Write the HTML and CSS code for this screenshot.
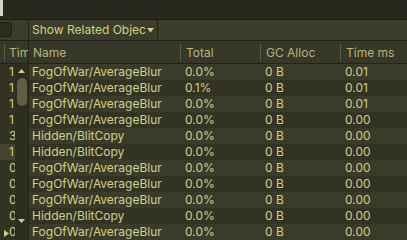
FILE: index.html
```html
<!DOCTYPE html>
<html>
<head>
<meta charset="utf-8">
<link rel="stylesheet" href="styles.css">
</head>
<body>
<div class="top"><div class="strip"></div></div>
<div class="toolbar">
  <div class="tb-left"><div class="field"></div></div>
  <div class="dropdown"><span class="dd-text">Show Related Objects</span><svg class="dd-arrow" width="7" height="5" viewBox="0 0 7 5"><path d="M0 0H7L3.5 4.5Z" fill="#cfcf8a"/></svg></div>
</div>
<div class="content">
  <div class="left">
    <div class="lhead"><span class="lline"></span><span class="ltext">Time ms</span></div>
    <div class="lbody">
      <div class="lnums">
        <div class="lrow">1</div>
        <div class="lrow">1</div>
        <div class="lrow">1</div>
        <div class="lrow">1</div>
        <div class="lrow">3</div>
        <div class="lrow sel">1</div>
        <div class="lrow">0</div>
        <div class="lrow">0</div>
        <div class="lrow">0</div>
        <div class="lrow">0</div>
        <div class="lrow"><svg class="fold" width="5" height="7" viewBox="0 0 5 7"><path d="M0 0L5 3.5L0 7Z" fill="#cfcf8a"/></svg>0</div>
      </div>
      <div class="scroll">
        <svg class="arr" width="7" height="4" viewBox="0 0 7 4"><path d="M0 4H7L3.5 0Z" fill="#cfcf8a"/></svg>
        <div class="thumb"></div>
        <div class="track-fill"></div>
        <svg class="arr" width="7" height="4" viewBox="0 0 7 4"><path d="M0 0H7L3.5 4Z" fill="#cfcf8a"/></svg>
      </div>
    </div>
  </div>
  <div class="table">
    <div class="thead">
      <div class="c name">Name</div>
      <div class="c col">Total</div>
      <div class="c col">GC Alloc</div>
      <div class="c col">Time ms</div>
    </div>
    <div class="row"><div class="c name">FogOfWar/AverageBlur</div><div class="c">0.0%</div><div class="c">0 B</div><div class="c">0.01</div></div>
    <div class="row"><div class="c name">FogOfWar/AverageBlur</div><div class="c">0.1%</div><div class="c">0 B</div><div class="c">0.01</div></div>
    <div class="row"><div class="c name">FogOfWar/AverageBlur</div><div class="c">0.0%</div><div class="c">0 B</div><div class="c">0.01</div></div>
    <div class="row"><div class="c name">FogOfWar/AverageBlur</div><div class="c">0.0%</div><div class="c">0 B</div><div class="c">0.00</div></div>
    <div class="row"><div class="c name">Hidden/BlitCopy</div><div class="c">0.0%</div><div class="c">0 B</div><div class="c">0.00</div></div>
    <div class="row"><div class="c name">Hidden/BlitCopy</div><div class="c">0.0%</div><div class="c">0 B</div><div class="c">0.00</div></div>
    <div class="row"><div class="c name">FogOfWar/AverageBlur</div><div class="c">0.0%</div><div class="c">0 B</div><div class="c">0.00</div></div>
    <div class="row"><div class="c name">FogOfWar/AverageBlur</div><div class="c">0.0%</div><div class="c">0 B</div><div class="c">0.00</div></div>
    <div class="row"><div class="c name">FogOfWar/AverageBlur</div><div class="c">0.0%</div><div class="c">0 B</div><div class="c">0.00</div></div>
    <div class="row"><div class="c name">Hidden/BlitCopy</div><div class="c">0.0%</div><div class="c">0 B</div><div class="c">0.00</div></div>
    <div class="row"><div class="c name">FogOfWar/AverageBlur</div><div class="c">0.0%</div><div class="c">0 B</div><div class="c">0.00</div></div>
  </div>
</div>
</body>
</html>
```
FILE: styles.css
```css
html, body {
  margin: 0;
  padding: 0;
  width: 407px;
  height: 240px;
  overflow: hidden;
  background: #353524;
  font-family: Inter, "Noto Sans", sans-serif;
  font-size: 12px;
  color: #cfcf8a;
}
.top {
  height: 19px;
  background: #28281d;
  border-bottom: 1px solid #1c1c14;
}
.strip {
  width: 3px;
  height: 16px;
  background: #d4d4cc;
}
.toolbar {
  height: 20px;
  display: flex;
  background: #3c3c2a;
  border-bottom: 1px solid #23231a;
}
.tb-left {
  width: 28px;
  border-right: 1px solid #23231a;
  padding-top: 2px;
  box-sizing: content-box;
}
.field {
  width: 12px;
  height: 15px;
  margin-left: 0;
  background: #2b2b1f;
  border: 1px solid #20201a;
  border-left: none;
  border-radius: 0 4px 4px 0;
  box-sizing: border-box;
}
.dropdown {
  width: 125px;
  padding-left: 3px;
  display: flex;
  align-items: center;
  border-right: 1px solid #23231a;
}
.dd-text {
  width: 114px;
  overflow: hidden;
  white-space: nowrap;
  line-height: 20px;
}
.dd-arrow {
  margin-left: 1px;
}
.content {
  display: flex;
  height: 199px;
}
.left {
  width: 28px;
  border-right: 1px solid #23231a;
  display: flex;
  flex-direction: column;
  overflow: hidden;
}
.lhead {
  height: 25px;
  display: flex;
  align-items: center;
  border-bottom: 1px solid #23231a;
  background: #38382a;
  overflow: hidden;
  white-space: nowrap;
}
.lline {
  width: 1px;
  height: 17px;
  margin-left: 4px;
  background: #5c5c40;
  flex: none;
}
.ltext {
  margin-left: 4px;
  color: #b4b47c;
}
.lbody {
  flex: 1;
  display: flex;
}
.lnums {
  width: 15px;
  overflow: hidden;
  background: #333323;
}
.lrow {
  height: 16px;
  line-height: 16px;
  padding-left: 9px;
  white-space: nowrap;
  position: relative;
}
.lrow.sel {
  background: #44442f;
}
.fold {
  position: absolute;
  left: 4px;
  top: 6px;
}
.scroll {
  width: 13px;
  background: #2d2d20;
  display: flex;
  flex-direction: column;
  align-items: center;
  padding-top: 5px;
}
.arr {
  flex: none;
}
.thumb {
  width: 10px;
  height: 28px;
  margin-top: 5px;
  border-radius: 5px;
  background: #5f5f42;
}
.track-fill {
  height: 113px;
}
.table {
  flex: 1;
  display: flex;
  flex-direction: column;
  overflow: hidden;
}
.thead {
  height: 25px;
  display: grid;
  grid-template-columns: 151px 80px 80px 80px;
  align-items: center;
  border-bottom: 1px solid #23231a;
  background: #38382a;
  color: #b4b47c;
}
.thead .col {
  border-left: 1px solid #5c5c40;
  height: 17px;
  line-height: 17px;
}
.thead .name {
  padding-left: 4px;
}
.row {
  height: 16px;
  flex: none;
  display: grid;
  grid-template-columns: 151px 80px 80px 80px;
  line-height: 16px;
  white-space: nowrap;
}
.row:nth-child(even) {
  background: #3b3b29;
}
.row:nth-child(odd) {
  background: #333323;
}
.c {
  padding-left: 5px;
  overflow: hidden;
}
.row .name {
  padding-left: 3px;
}
```
